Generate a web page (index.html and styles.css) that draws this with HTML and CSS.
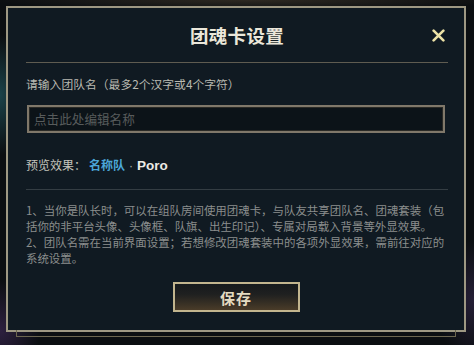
FILE: index.html
```html
<!DOCTYPE html>
<html lang="zh-CN">
<head>
<meta charset="utf-8">
<title>团魂卡设置</title>
<link rel="stylesheet" href="styles.css">
</head>
<body>
<div class="scene">
  <section class="dialog">
    <header class="dialog-head">
      <span></span>
      <h1 class="dialog-title">团魂卡设置</h1>
      <button class="close" aria-label="关闭">
        <svg viewBox="0 0 12 12" width="13" height="13"><path d="M1.5 1.5 L10.5 10.5 M10.5 1.5 L1.5 10.5" stroke="#ece2a6" stroke-width="2.4" stroke-linecap="round"/></svg>
      </button>
    </header>
    <div class="dialog-body">
      <p class="label">请输入团队名（最多2个汉字或4个字符）</p>
      <div class="input">点击此处编辑名称</div>
      <p class="preview">预览效果：<span class="team">名称队</span><span class="dot">·</span><span class="name">Poro</span></p>
      <div class="rule"></div>
      <div class="notes">
        <p>1、当你是队长时，可以在组队房间使用团魂卡，与队友共享团队名、团魂套装（包<br>括你的非平台头像、头像框、队旗、出生印记）、专属对局载入背景等外显效果。</p>
        <p>2、团队名需在当前界面设置；若想修改团魂套装中的各项外显效果，需前往对应的<br>系统设置。</p>
      </div>
      <button class="save">保存</button>
    </div>
  </section>
</div>
</body>
</html>
```

FILE: styles.css
```css
* { box-sizing: border-box; }
html, body {
  margin: 0;
  padding: 0;
  width: 474px;
  height: 345px;
  overflow: hidden;
}
body {
  font-family: "Noto Sans CJK SC", "Noto Sans", sans-serif;
  background:
    radial-gradient(ellipse 30px 60px at 0px 95px, rgba(40,110,120,0.55), transparent),
    radial-gradient(ellipse 40px 50px at 0px 330px, rgba(80,50,110,0.5), transparent),
    radial-gradient(ellipse 40px 60px at 474px 300px, rgba(70,50,100,0.45), transparent),
    radial-gradient(ellipse 260px 10px at 250px 0px, rgba(90,75,55,0.45), transparent),
    #0b0e11;
}
.scene {
  padding: 6px 8px 0 6px;
}
.dialog {
  position: relative;
  width: 460px;
  height: 326px;
  border: 2px solid #9e9883;
  background: #101a22;
  padding: 0 16px 0 18px;
  display: flex;
  flex-direction: column;
}
.dialog::after {
  content: "";
  position: absolute;
  left: 8px;
  right: 8px;
  top: 100%;
  height: 6px;
  border: 1px solid #6c6650;
  border-top: none;
}
.dialog-head {
  height: 55px;
  display: grid;
  grid-template-columns: 1fr auto 1fr;
  align-items: center;
  border-bottom: 1px solid #5f5c51;
}
.dialog-title {
  margin: 0;
  font-size: 18.5px;
  font-weight: 700;
  color: #ebe7da;
  letter-spacing: 0.3px;
  line-height: 1;
  padding-top: 1px;
}
.close {
  justify-self: end;
  margin-right: 3px;
  background: none;
  border: none;
  padding: 0;
  display: flex;
  width: 13px;
  height: 13px;
}
.dialog-body {
  display: flex;
  flex-direction: column;
}
.label {
  margin: 12px 0 0;
  font-size: 11.8px;
  line-height: 18px;
  color: #b9b9b1;
}
.input {
  margin: 12px 0 0 1px;
  width: 418px;
  height: 28px;
  border: 2px solid #80786a;
  background: #0c1318;
  box-shadow: inset 0 0 0 1px #2a2a26;
  color: #585c5c;
  font-size: 12.6px;
  line-height: 24px;
  padding-left: 5px;
}
.preview {
  margin: 23px 0 0;
  font-size: 12px;
  line-height: 18px;
  color: #c4c4bc;
}
.team {
  color: #4ba6d8;
  font-weight: 700;
  margin-left: 3px;
}
.dot {
  color: #b0b0aa;
  font-family: "Liberation Sans", sans-serif;
  margin: 0 4px;
}
.name {
  color: #ecebe6;
  font-weight: 700;
  font-family: "Liberation Sans", "Noto Sans", sans-serif;
  font-size: 13.5px;
}
.rule {
  margin-top: 14px;
  height: 1px;
  background: #343d43;
}
.notes {
  margin-top: 12px;
  font-size: 11.45px;
  line-height: 16px;
  color: #8b8e8d;
  white-space: nowrap;
}
.notes p { margin: 0; }
.save {
  align-self: center;
  margin: 16px 0 0 -2px;
  width: 127px;
  height: 30px;
  border: 2px solid #c2b58e;
  background: linear-gradient(to bottom, #161a1c 0%, #1f2020 40%, #3b3225 80%, #4a3c29 100%);
  color: #e4dbc0;
  font-family: "Noto Sans CJK SC", sans-serif;
  font-size: 15px;
  font-weight: 700;
  letter-spacing: 1px;
  line-height: 1;
  padding: 0;
}
```
